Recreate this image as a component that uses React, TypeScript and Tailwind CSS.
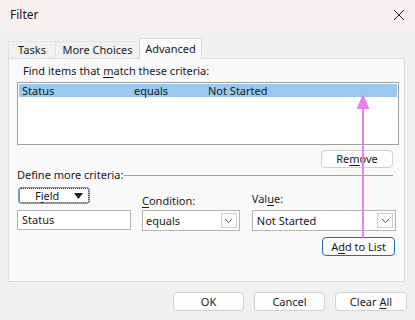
const font = { fontFamily: '"Noto Sans", "Open Sans", sans-serif' };

function U({ children }: { children: string }) {
  return <span className="underline underline-offset-2">{children}</span>;
}

function Chevron() {
  return (
    <svg width="9" height="6" viewBox="0 0 9 6" fill="none">
      <path d="M1 1l3.5 3.5L8 1" stroke="#555" strokeWidth="1" />
    </svg>
  );
}

export default function App() {
  return (
    <div
      className="relative w-[415px] h-[320px] bg-[#f0f0f0] text-[#1a1a1a] text-[11px] leading-[14px] overflow-hidden"
      style={font}
    >
      {/* title bar */}
      <div className="h-[30px] bg-[#f7f0f1] flex items-center justify-between pl-[10px] pr-[10px]">
        <span className="text-[12px]">Filter</span>
        <svg width="12" height="12" viewBox="0 0 12 12">
          <path d="M1 1l10 10M11 1L1 11" stroke="#222" strokeWidth="1" />
        </svg>
      </div>

      {/* tabs */}
      <div className="flex items-end mt-[8px] ml-[8px] h-[20px]">
        <div className="h-[17px] w-[47px] flex items-center justify-center border-t border-l border-[#e2e2e2] bg-[#f0f0f0]">
          Tasks
        </div>
        <div className="h-[17px] w-[84px] flex items-center justify-center border-t border-l border-[#e2e2e2] bg-[#f0f0f0]">
          More Choices
        </div>
        <div className="relative z-10 -mb-px h-[21px] w-[63px] flex items-center justify-center border-t border-l border-r border-[#d9d9d9] bg-[#f9f9f9]">
          Advanced
        </div>
      </div>

      {/* panel */}
      <div className="ml-[8px] w-[397px] h-[224px] bg-[#f9f9f9] border border-[#dcdcdc] px-[8px] flex flex-col">
        <div className="mt-[5px] ml-[6px]">
          Find items that <U>m</U>atch these criteria:
        </div>
        <div className="mt-[4px] h-[63px] w-[382px] bg-white border border-[#a0a0a0] p-px">
          <div className="h-[13px] bg-[#99c9ef] flex items-center pl-[3px]">
            <span className="w-[112px]">Status</span>
            <span className="w-[74px]">equals</span>
            <span>Not Started</span>
          </div>
        </div>
        <div className="flex justify-end pr-[3px] mt-[5px]">
          <button className="w-[72px] h-[18px] bg-[#fdfdfd] border border-[#cfcfcf] rounded-[4px] flex items-center justify-center">
            Re<U>m</U>ove
          </button>
        </div>
        <div className="flex items-center h-[14px] pr-[3px]">
          <span>Define more criteria:</span>
          <div className="flex-1 h-px bg-[#a0a0a0] ml-[1px]" />
        </div>

        <div className="flex mt-[5px]">
          {/* field column */}
          <div className="w-[114px] flex flex-col">
            <button className="ml-[1px] w-[72px] h-[17px] bg-[#fdfdfd] border border-[#7f9cc4] rounded-[3px] outline-1 outline-dotted outline-[#222] -outline-offset-2 flex items-center pl-[16px] pr-[6px] justify-between">
              <span>
                F<U>i</U>eld
              </span>
              <svg width="9" height="6" viewBox="0 0 9 6">
                <path d="M0 0h9L4.5 6z" fill="#222" />
              </svg>
            </button>
            <div className="mt-[6px] h-[20px] w-[114px] bg-white border border-[#b4b4b4] flex items-center pl-[4px]">
              Status
            </div>
          </div>

          {/* condition column */}
          <div className="ml-[11px] w-[99px] flex flex-col">
            <div className="mt-[7px] h-[14px]">
              <U>C</U>ondition:
            </div>
            <div className="mt-[2px] h-[21px] bg-white border border-[#b4b4b4] flex items-center justify-between pl-[3px] pr-[2px]">
              <span>equals</span>
              <span className="w-[16px] h-[15px] border border-[#cfcfcf] bg-[#fafafa] flex items-center justify-center">
                <Chevron />
              </span>
            </div>
          </div>

          {/* value column */}
          <div className="ml-[12px] w-[146px] flex flex-col">
            <div className="mt-[5px] h-[14px]">
              Val<U>u</U>e:
            </div>
            <div className="mt-[4px] h-[21px] bg-white border border-[#b4b4b4] flex items-center justify-between pl-[4px] pr-[2px]">
              <span>Not Started</span>
              <span className="w-[16px] h-[15px] border border-[#cfcfcf] bg-[#fafafa] flex items-center justify-center">
                <Chevron />
              </span>
            </div>
            <div className="flex justify-end mt-[6px] pr-[1px]">
              <button className="w-[73px] h-[19px] bg-[#fdfdfd] border border-[#1a6bbf] rounded-[4px] flex items-center justify-center">
                A<U>d</U>d to List
              </button>
            </div>
          </div>
        </div>
      </div>

      {/* bottom buttons */}
      <div className="flex justify-end gap-[10px] pr-[8px] mt-[10px]">
        <button className="w-[71px] h-[19px] bg-[#fdfdfd] border border-[#d0d0d0] rounded-[4px]">OK</button>
        <button className="w-[71px] h-[19px] bg-[#fdfdfd] border border-[#d0d0d0] rounded-[4px]">Cancel</button>
        <button className="w-[72px] h-[19px] bg-[#fdfdfd] border border-[#d0d0d0] rounded-[4px]">
          Clear <U>A</U>ll
        </button>
      </div>

      {/* annotation arrow */}
      <svg className="absolute left-[355px] top-[94px]" width="16" height="146" viewBox="0 0 16 146">
        <path d="M8 12V144" stroke="#f07df0" strokeWidth="2" />
        <path d="M8 0L14.5 15H1.5z" fill="#f07df0" />
      </svg>
    </div>
  );
}
